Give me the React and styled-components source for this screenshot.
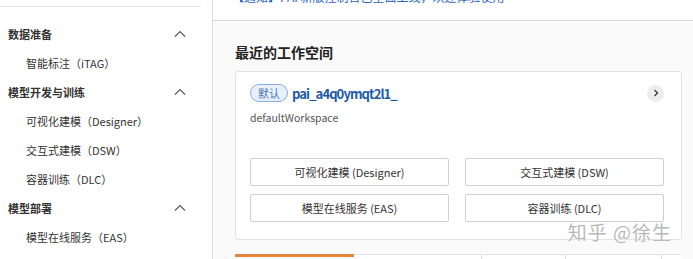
import React from "react";
import styled, { createGlobalStyle } from "styled-components";

const Global = createGlobalStyle`
  html, body { margin: 0; padding: 0; background: #fff; overflow: hidden; }
  body { font-family: "Noto Sans CJK SC", "Noto Sans", sans-serif; color: #333; }
  * { box-sizing: border-box; }
`;

const Page = styled.div`
  display: flex;
  width: 693px;
  height: 259px;
  overflow: hidden;
  position: relative;
`;

const Sidebar = styled.aside`
  width: 213px;
  flex: none;
  background: #fff;
  border-right: 1px solid #dcdcdc;
`;

const TopLine = styled.div`
  height: 7px;
  width: 201px;
  border-bottom: 1px solid #e6e6e6;
  margin-bottom: 12px;
`;

const GroupRow = styled.div`
  height: 29px;
  display: flex;
  align-items: center;
  justify-content: space-between;
  padding: 0 26px 0 8px;
  font-size: 11px;
  font-weight: 700;
  color: #333;
`;

const ItemRow = styled.div`
  height: 29px;
  display: flex;
  align-items: center;
  padding-left: 26px;
  font-size: 11px;
  color: #333;
`;

const Main = styled.main`
  flex: 1;
  background: #fafafa;
  display: flex;
  flex-direction: column;
  position: relative;
  overflow: hidden;
`;

const Notice = styled.div`
  flex: none;
  height: 21px;
  background: #fff;
  border-bottom: 1px solid #d9d9d9;
  overflow: hidden;
  padding-left: 19px;
`;

const NoticeText = styled.div`
  margin-top: -11px;
  font-size: 12px;
  line-height: 16px;
  color: #1f64c4;
  white-space: nowrap;
`;

const Content = styled.div`
  flex: none;
  padding: 21px 11px 0 22px;
`;

const Title = styled.h2`
  margin: 0 0 9px 0;
  font-size: 14px;
  line-height: 20px;
  font-weight: 700;
  color: #222;
`;

const Card = styled.section`
  background: #fff;
  border: 1px solid #e3e3e3;
  border-radius: 3px;
  padding: 11px 14px 17px 14px;
`;

const CardHead = styled.div`
  display: flex;
  align-items: center;
  height: 20px;
`;

const Badge = styled.span`
  display: inline-flex;
  align-items: center;
  justify-content: center;
  width: 38px;
  height: 18px;
  border-radius: 9px;
  background: #e7f0fb;
  border: 1px solid #86ade0;
  color: #4a78b3;
  font-size: 11px;
  line-height: 1;
`;

const WsName = styled.span`
  margin-left: 4px;
  font-size: 13px;
  font-weight: 700;
  letter-spacing: -0.9px;
  color: #1b5ba6;
  flex: 1;
`;

const ArrowBtn = styled.span`
  width: 17px;
  height: 17px;
  border-radius: 50%;
  background: #ececf1;
  display: inline-flex;
  align-items: center;
  justify-content: center;
  margin-right: 3px;
`;

const SubName = styled.div`
  margin-top: 7px;
  font-size: 10.5px;
  line-height: 16px;
  color: #555;
`;

const BtnGrid = styled.div`
  margin-top: 32px;
  display: grid;
  grid-template-columns: 199px 199px;
  column-gap: 16px;
  row-gap: 8px;
`;

const ActionBtn = styled.button`
  height: 28px;
  background: #fff;
  border: 1px solid #cfcfcf;
  border-radius: 2px;
  font-family: inherit;
  font-size: 11px;
  color: #333;
  padding: 0;
`;

const Tabs = styled.div`
  margin-top: 14px;
  display: flex;
  border-top: 1px solid #e3e3e3;
  height: 12px;
`;

const Tab = styled.div`
  width: ${(p) => p.$w}px;
  border-top: ${(p) => (p.$active ? "3px solid #e8873b" : "none")};
  margin-top: ${(p) => (p.$active ? "-1px" : "0")};
  border-right: ${(p) => (p.$divider ? "1px solid #dedede" : "none")};
  background: ${(p) => (p.$active ? "#fafafa" : "#fff")};
`;

const Watermark = styled.div`
  position: absolute;
  right: 21px;
  top: 219px;
  font-size: 19px;
  line-height: 26px;
  color: #b9b9b9;
  letter-spacing: 1px;
  text-shadow: 0 0 1px #fff, 0 0 2px #fff;
  white-space: nowrap;
`;

const Up = () => (
  <svg width="12" height="8" viewBox="0 0 12 8">
    <path d="M1 6.5 L6 1.5 L11 6.5" fill="none" stroke="#555" strokeWidth="1.1" />
  </svg>
);

const Chevron = () => (
  <svg width="6" height="8" viewBox="0 0 6 8">
    <path d="M1.5 1 L4.5 4 L1.5 7" fill="none" stroke="#333" strokeWidth="1.2" />
  </svg>
);

const menu = [
  { title: "数据准备", items: ["智能标注（iTAG）"] },
  { title: "模型开发与训练", items: ["可视化建模（Designer）", "交互式建模（DSW）", "容器训练（DLC）"] },
  { title: "模型部署", items: ["模型在线服务（EAS）"] },
];

const buttons = ["可视化建模 (Designer)", "交互式建模 (DSW)", "模型在线服务 (EAS)", "容器训练 (DLC)"];

export default function App() {
  return (
    <>
      <Global />
      <Page>
        <Sidebar>
          <TopLine />
          {menu.map((g) => (
            <React.Fragment key={g.title}>
              <GroupRow>
                <span>{g.title}</span>
                <Up />
              </GroupRow>
              {g.items.map((it) => (
                <ItemRow key={it}>{it}</ItemRow>
              ))}
            </React.Fragment>
          ))}
        </Sidebar>
        <Main>
          <Notice>
            <NoticeText>【通知】PAI 新版控制台已全面上线，欢迎体验使用</NoticeText>
          </Notice>
          <Content>
            <Title>最近的工作空间</Title>
            <Card>
              <CardHead>
                <Badge>默认</Badge>
                <WsName>pai_a4q0ymqt2l1_</WsName>
                <ArrowBtn>
                  <Chevron />
                </ArrowBtn>
              </CardHead>
              <SubName>defaultWorkspace</SubName>
              <BtnGrid>
                {buttons.map((b) => (
                  <ActionBtn key={b}>{b}</ActionBtn>
                ))}
              </BtnGrid>
            </Card>
            <Tabs>
              <Tab $w={122} $active />
              <Tab $w={131} $divider />
              <Tab $w={85} $divider />
              <Tab $w={99} $divider />
              <Tab $w={20} />
            </Tabs>
          </Content>
          <Watermark>知乎 @徐生</Watermark>
        </Main>
      </Page>
    </>
  );
}
